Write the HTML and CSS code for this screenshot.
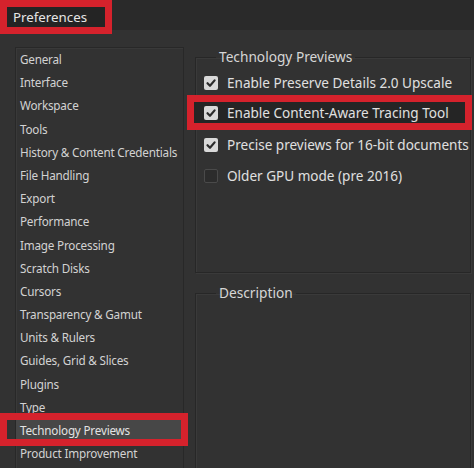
FILE: index.html
```html
<!DOCTYPE html>
<html lang="en">
<head>
<meta charset="utf-8">
<title>Preferences</title>
<link rel="stylesheet" href="styles.css">
</head>
<body>
<header class="titlebar">
  <div class="title">Preferences</div>
</header>
<main class="main">
  <nav class="sidebar">
    <ul class="menu">
      <li class="item">General</li>
      <li class="item">Interface</li>
      <li class="item">Workspace</li>
      <li class="item">Tools</li>
      <li class="item">History &amp; Content Credentials</li>
      <li class="item">File Handling</li>
      <li class="item">Export</li>
      <li class="item">Performance</li>
      <li class="item">Image Processing</li>
      <li class="item">Scratch Disks</li>
      <li class="item">Cursors</li>
      <li class="item">Transparency &amp; Gamut</li>
      <li class="item">Units &amp; Rulers</li>
      <li class="item">Guides, Grid &amp; Slices</li>
      <li class="item">Plugins</li>
      <li class="item">Type</li>
      <li class="item selected">Technology Previews</li>
      <li class="item">Product Improvement</li>
    </ul>
  </nav>
  <section class="content">
    <fieldset class="group previews">
      <legend class="legend">Technology Previews</legend>
      <div class="row">
        <span class="check on"><svg viewBox="0 0 14 14" width="14" height="14"><path d="M3.5 7.2 L6 9.8 L10.6 4.4" fill="none" stroke="#2b2b2b" stroke-width="2.2" stroke-linecap="round" stroke-linejoin="round"/></svg></span>
        <span class="label">Enable Preserve Details 2.0 Upscale</span>
      </div>
      <div class="row marked">
        <span class="check on"><svg viewBox="0 0 14 14" width="14" height="14"><path d="M3.5 7.2 L6 9.8 L10.6 4.4" fill="none" stroke="#2b2b2b" stroke-width="2.2" stroke-linecap="round" stroke-linejoin="round"/></svg></span>
        <span class="label">Enable Content-Aware Tracing Tool</span>
      </div>
      <div class="row">
        <span class="check on"><svg viewBox="0 0 14 14" width="14" height="14"><path d="M3.5 7.2 L6 9.8 L10.6 4.4" fill="none" stroke="#2b2b2b" stroke-width="2.2" stroke-linecap="round" stroke-linejoin="round"/></svg></span>
        <span class="label">Precise previews for 16-bit documents</span>
      </div>
      <div class="row">
        <span class="check off"></span>
        <span class="label">Older GPU mode (pre 2016)</span>
      </div>
    </fieldset>
    <fieldset class="group description">
      <legend class="legend">Description</legend>
    </fieldset>
  </section>
</main>
</body>
</html>
```

FILE: styles.css
```css
* { box-sizing: border-box; }
html, body { margin: 0; padding: 0; }
body {
  width: 474px;
  height: 468px;
  overflow: hidden;
  background: #323232;
  color: #d4d4d4;
  font-family: "Noto Sans", "Open Sans", sans-serif;
}

.titlebar {
  height: 30px;
  background: #2a2a2a;
  padding: 7px 0 0 7px;
}
.title {
  width: 98px;
  height: 20px;
  background: #242424;
  outline: 7px solid #d5222c;
  color: #e6e6e6;
  font-size: 13.3px;
  line-height: 20px;
  padding-left: 6px;
}

.main {
  display: flex;
  align-items: flex-start;
  padding: 17px 0 0 15px;
}

.sidebar {
  width: 169px;
  height: 440px;
  flex: none;
  border: 1px solid #282828;
  box-shadow: inset 1px 1px 0 #393939;
  background: #323232;
}
.menu {
  list-style: none;
  margin: 0;
  padding: 0;
}
.item {
  height: 23.2px;
  line-height: 23.2px;
  padding-left: 4px;
  margin-right: 2px;
  font-size: 11.7px;
  letter-spacing: -0.2px;
  color: #d2d2d2;
  white-space: nowrap;
}
.item.selected {
  position: relative;
  background: #474747;
  color: #e2e2e2;
}
.item.selected::after {
  content: "";
  position: absolute;
  left: -16px;
  right: -7px;
  top: -6px;
  bottom: -4px;
  border: 7px solid #d5222c;
}

.content {
  flex: 1;
  margin-left: 11px;
  min-width: 0;
}

.group {
  margin: 0;
  padding: 0;
  border: 1px solid #272727;
  box-shadow: inset 1px 1px 0 #3a3a3a, 1px 1px 0 #3a3a3a;
  min-width: 0;
}
.legend {
  margin-left: 20px;
  padding: 0 3px;
  font-size: 13.7px;
  line-height: 18px;
  color: #d6d6d6;
}
.previews {
  width: 276px;
  height: 225px;
  margin-top: 1px;
}
.description {
  width: 276px;
  height: 200px;
  margin-top: 11px;
}

.row {
  display: flex;
  align-items: center;
  height: 31px;
  padding-left: 8px;
}
.row:first-of-type { margin-top: 1px; }
.row.marked {
  height: 21px;
  margin: 4px 5px 6px -2px;
  padding: 1px 0 0 10px;
  background: #252525;
  outline: 7px solid #d5222c;
}
.check {
  width: 14px;
  height: 14px;
  flex: none;
  border-radius: 2px;
  display: flex;
}
.check.on { background: #d9d9d9; }
.check.off {
  background: #2c2c2c;
  border: 1px solid #4a4a4a;
}
.label {
  margin-left: 9px;
  font-size: 13.55px;
  color: #e0e0e0;
  white-space: nowrap;
}
```
